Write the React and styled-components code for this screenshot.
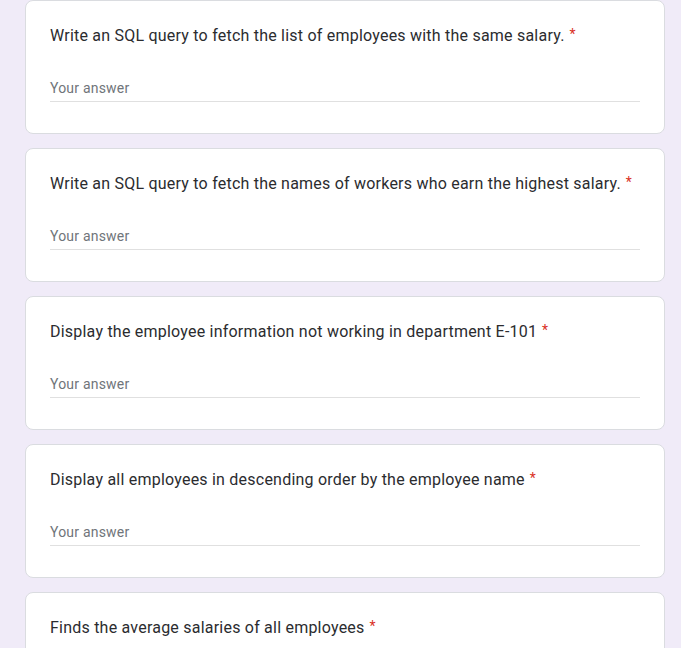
import React from "react";
import styled, { createGlobalStyle } from "styled-components";

const questions = [
  "Write an SQL query to fetch the list of employees with the same salary.",
  "Write an SQL query to fetch the names of workers who earn the highest salary.",
  "Display the employee information not working in department E-101",
  "Display all employees in descending order by the employee name",
  "Finds the average salaries of all employees",
];

const GlobalStyle = createGlobalStyle`
  html, body {
    margin: 0;
    padding: 0;
    background: #f0ebf8;
  }
  body {
    font-family: Roboto, "Liberation Sans", Arial, sans-serif;
  }
`;

const Page = styled.div`
  display: flex;
  flex-direction: column;
  gap: 14px;
  padding-left: 25px;
  width: 640px;
  height: 648px;
  overflow: hidden;
`;

const Card = styled.div`
  box-sizing: border-box;
  width: 640px;
  background: #fff;
  border: 1px solid #dadce0;
  border-radius: 8px;
  padding: 23px 24px 31px;
  flex-shrink: 0;
`;

const Title = styled.div`
  font-family: Roboto, "Liberation Sans", Arial, sans-serif;
  font-size: 16px;
  line-height: 24px;
  height: 24px;
  color: #2b2c2f;
  letter-spacing: 0.22px;
`;

const Required = styled.span`
  color: #d93025;
  padding-left: 0.35em;
  font-size: 14px;
  position: relative;
  top: -2px;
`;

const Field = styled.div`
  margin-top: 30px;
  padding-bottom: 3px;
  border-bottom: 1px solid #e0e0e0;
  width: 590px;
`;

const Placeholder = styled.div`
  font-size: 14px;
  line-height: 20px;
  color: #70757a;
  letter-spacing: 0.2px;
`;

export default function App() {
  return (
    <>
      <GlobalStyle />
      <Page>
        {questions.map((q) => (
          <Card key={q}>
            <Title>
              {q}
              <Required>*</Required>
            </Title>
            <Field>
              <Placeholder>Your answer</Placeholder>
            </Field>
          </Card>
        ))}
      </Page>
    </>
  );
}
